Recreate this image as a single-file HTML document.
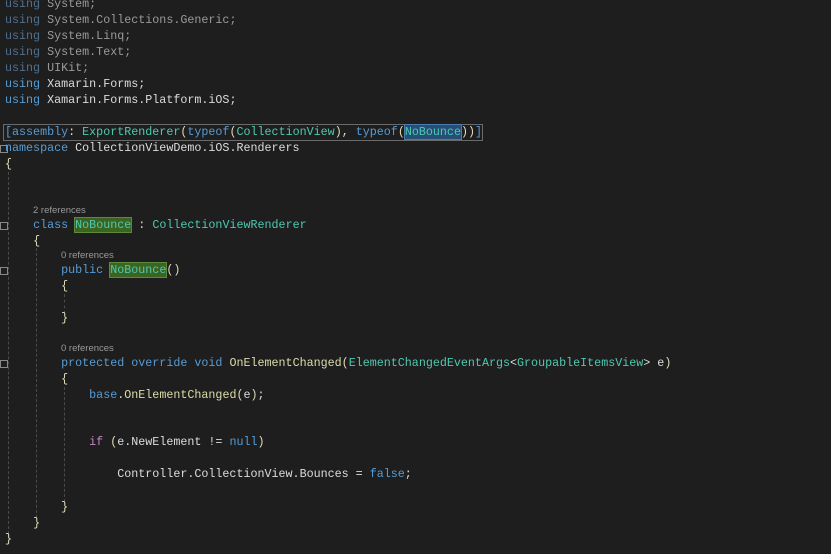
<!DOCTYPE html>
<html><head><meta charset="utf-8"><style>
html,body{margin:0;padding:0;background:#1e1e1e;width:831px;height:554px;overflow:hidden;position:relative}
.l{position:absolute;left:5px;height:16px;line-height:16px;font-family:"Liberation Mono",monospace;font-size:11.7px;color:#dcdcdc;white-space:pre}
.k{color:#569cd6}.d{color:#4f6f8f}.t{color:#4ec9b0}.m{color:#dcdcaa}.b{color:#e2dcb8}.p{color:#e2dcb8}.c{color:#c586c0}
.ref{position:absolute;font-family:"Liberation Sans",sans-serif;font-size:9.5px;color:#999;line-height:12px}
.hl{background:#3b6421;outline:1px solid #5a8a3a}
.hb{background:#264f78;outline:1px solid #4a7cae}
.g{position:absolute;width:0;border-left:1px dashed #4a4a4a}
.f{position:absolute;left:0;width:6px;height:6px;border:1px solid #888;font-size:0}
</style></head><body>
<div class="g" style="left:8px;top:172px;height:362px"></div>
<div class="g" style="left:36px;top:248px;height:270px"></div>
<div class="g" style="left:64px;top:294px;height:20px"></div>
<div class="g" style="left:64px;top:387px;height:115px"></div>
<div class="f" style="top:145px"></div>
<div class="f" style="top:222px"></div>
<div class="f" style="top:267px"></div>
<div class="f" style="top:360px"></div>
<div style="position:absolute;left:3px;top:124px;width:478px;height:15px;border:1px solid #6a6a6a"></div>
<div class="l" style="top:-4px"><span class="d">using</span><span style="color:#9a9a9a"> System;</span></div>
<div class="l" style="top:12px"><span class="d">using</span><span style="color:#9a9a9a"> System.Collections.Generic;</span></div>
<div class="l" style="top:28px"><span class="d">using</span><span style="color:#9a9a9a"> System.Linq;</span></div>
<div class="l" style="top:44px"><span class="d">using</span><span style="color:#9a9a9a"> System.Text;</span></div>
<div class="l" style="top:60px"><span class="d">using</span><span style="color:#9a9a9a"> UIKit;</span></div>
<div class="l" style="top:76px"><span class="k">using</span> Xamarin.Forms;</div>
<div class="l" style="top:92px"><span class="k">using</span> Xamarin.Forms.Platform.iOS;</div>
<div class="l" style="top:124px"><span class="k">[assembly</span>: <span class="t">ExportRenderer</span><span class="p">(</span><span class="k">typeof</span><span class="p">(</span><span class="t">CollectionView</span><span class="p">)</span>, <span class="k">typeof</span><span class="p">(</span><span class="t hb">NoBounce</span><span class="p">))</span><span class="k">]</span></div>
<div class="l" style="top:140px"><span class="k">namespace</span> CollectionViewDemo.iOS.Renderers</div>
<div class="l" style="top:156px"><span class="b">{</span></div>
<div class="ref" style="left:33px;top:205px">2 references</div>
<div class="l" style="top:217px">    <span class="k">class</span> <span class="t hl">NoBounce</span> : <span class="t">CollectionViewRenderer</span></div>
<div class="l" style="top:233px">    <span class="b">{</span></div>
<div class="ref" style="left:61px;top:250px">0 references</div>
<div class="l" style="top:262px">        <span class="k">public</span> <span class="t hl">NoBounce</span><span class="b">()</span></div>
<div class="l" style="top:278px">        <span class="b">{</span></div>
<div class="l" style="top:310px">        <span class="b">}</span></div>
<div class="ref" style="left:61px;top:343px">0 references</div>
<div class="l" style="top:355px">        <span class="k">protected</span> <span class="k">override</span> <span class="k">void</span> <span class="m">OnElementChanged</span><span class="b">(</span><span class="t">ElementChangedEventArgs</span>&lt;<span class="t">GroupableItemsView</span>&gt; e<span class="b">)</span></div>
<div class="l" style="top:371px">        <span class="b">{</span></div>
<div class="l" style="top:387px">            <span class="k">base</span>.<span class="m">OnElementChanged</span><span class="b">(</span>e<span class="b">)</span>;</div>
<div class="l" style="top:434px">            <span class="c">if</span> <span class="b">(</span>e.NewElement != <span class="k">null</span><span class="b">)</span></div>
<div class="l" style="top:466px">                Controller.CollectionView.Bounces = <span class="k">false</span>;</div>
<div class="l" style="top:499px">        <span class="b">}</span></div>
<div class="l" style="top:515px">    <span class="b">}</span></div>
<div class="l" style="top:531px"><span class="b">}</span></div>
</body></html>
